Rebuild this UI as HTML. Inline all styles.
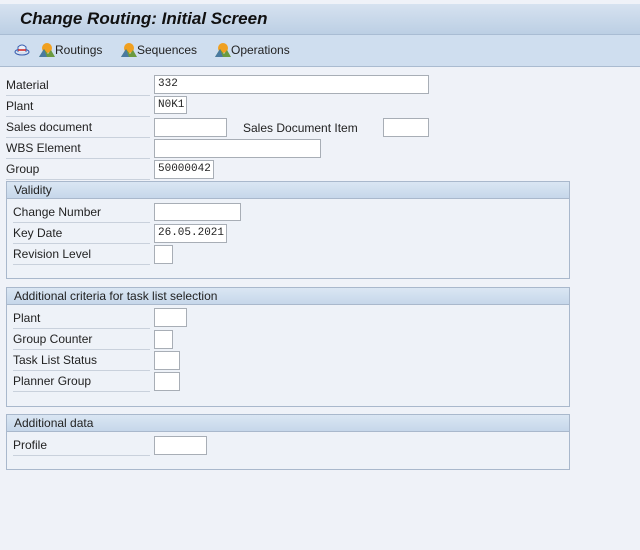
<!DOCTYPE html><html><head><style>
body{margin:0;width:640px;height:550px;background:#eff2f8;font-family:"Liberation Sans",Tahoma,sans-serif;font-size:12px;color:#222;position:relative;overflow:hidden}
.a{position:absolute}
.title{left:0;top:4px;width:640px;height:30px;background:linear-gradient(#d6e2f0,#bccfe4);border-bottom:1px solid #a9bcd3}
.title span{position:absolute;left:20px;top:5px;font-size:17px;font-weight:bold;font-style:italic;color:#111}
.tb{left:0;top:35px;width:640px;height:31px;background:#cfdeef;border-bottom:1px solid #aabbd0}
.lbl{position:absolute;height:20px;line-height:20px;border-bottom:1px solid #c9d1dc;font-size:12px}
.in{position:absolute;height:17px;background:#fff;border:1px solid #a8aeb6;box-sizing:border-box;font-family:"Liberation Mono",monospace;font-size:11px;line-height:16px;padding-left:3px}
.box{position:absolute;left:6px;width:564px;border:1px solid #a9b8cc;box-sizing:border-box;background:#eef2f8}
.box .h{height:16px;line-height:16px;background:linear-gradient(#dae6f3,#c6d7ea);border-bottom:1px solid #a9b8cc;padding-left:7px}
</style></head><body>
<div class="a title"><span>Change Routing: Initial Screen</span></div>
<div class="a tb">
<svg class="a" style="left:14px;top:8px" width="16" height="13"><ellipse cx="8" cy="9" rx="7" ry="3" fill="#d6e0f0" stroke="#3a5fb0"/><path d="M4 9V4Q8 0 12 4V9" fill="#e9eff8" stroke="#3a5fb0"/><path d="M4 7H12" stroke="#d02020" stroke-width="1.5"/></svg>
<svg class="a" style="left:39px;top:7px" width="16" height="16"><circle cx="8" cy="6" r="5" fill="#f0a020"/><path d="M0 15L5 7L9 12L12 8L16 15Z" fill="#6a9a40"/><path d="M0 15L5 7L8 15Z" fill="#4a7aa0"/></svg>
<span class="a" style="left:55px;top:8px">Routings</span>
<svg class="a" style="left:121px;top:7px" width="16" height="16"><circle cx="8" cy="6" r="5" fill="#f0a020"/><path d="M0 15L5 7L9 12L12 8L16 15Z" fill="#6a9a40"/><path d="M0 15L5 7L8 15Z" fill="#4a7aa0"/></svg>
<span class="a" style="left:137px;top:8px">Sequences</span>
<svg class="a" style="left:215px;top:7px" width="16" height="16"><circle cx="8" cy="6" r="5" fill="#f0a020"/><path d="M0 15L5 7L9 12L12 8L16 15Z" fill="#6a9a40"/><path d="M0 15L5 7L8 15Z" fill="#4a7aa0"/></svg>
<span class="a" style="left:231px;top:8px">Operations</span>
</div>

<div class="lbl" style="left:6px;top:75px;width:144px">Material</div><div class="in" style="left:154px;top:75px;width:275px;height:19px">332</div>
<div class="lbl" style="left:6px;top:96px;width:144px">Plant</div><div class="in" style="left:154px;top:96px;width:33px;height:18px">N0K1</div>
<div class="lbl" style="left:6px;top:117px;width:144px">Sales document</div><div class="in" style="left:154px;top:118px;width:73px;height:19px"></div>
<span class="a" style="left:243px;top:121px">Sales Document Item</span><div class="in" style="left:383px;top:118px;width:46px;height:19px"></div>
<div class="lbl" style="left:6px;top:138px;width:144px">WBS Element</div><div class="in" style="left:154px;top:139px;width:167px;height:19px"></div>
<div class="lbl" style="left:6px;top:159px;width:144px">Group</div><div class="in" style="left:154px;top:160px;width:60px;height:19px">50000042</div>

<div class="box" style="top:181px;height:98px"><div class="h">Validity</div></div>
<div class="lbl" style="left:13px;top:202px;width:137px">Change Number</div><div class="in" style="left:154px;top:203px;width:87px;height:18px"></div>
<div class="lbl" style="left:13px;top:223px;width:137px">Key Date</div><div class="in" style="left:154px;top:224px;width:73px;height:19px">26.05.2021</div>
<div class="lbl" style="left:13px;top:244px;width:137px">Revision Level</div><div class="in" style="left:154px;top:245px;width:19px;height:19px"></div>

<div class="box" style="top:287px;height:120px"><div class="h">Additional criteria for task list selection</div></div>
<div class="lbl" style="left:13px;top:308px;width:137px">Plant</div><div class="in" style="left:154px;top:308px;width:33px;height:19px"></div>
<div class="lbl" style="left:13px;top:329px;width:137px">Group Counter</div><div class="in" style="left:154px;top:330px;width:19px;height:19px"></div>
<div class="lbl" style="left:13px;top:350px;width:137px">Task List Status</div><div class="in" style="left:154px;top:351px;width:26px;height:19px"></div>
<div class="lbl" style="left:13px;top:371px;width:137px">Planner Group</div><div class="in" style="left:154px;top:372px;width:26px;height:19px"></div>

<div class="box" style="top:414px;height:56px"><div class="h">Additional data</div></div>
<div class="lbl" style="left:13px;top:435px;width:137px">Profile</div><div class="in" style="left:154px;top:436px;width:53px;height:19px"></div>
</body></html>
